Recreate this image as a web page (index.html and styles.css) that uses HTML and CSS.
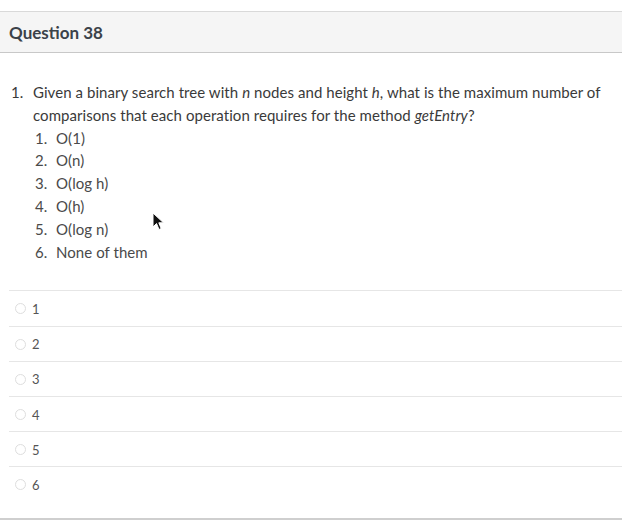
FILE: index.html
```html
<!DOCTYPE html>
<html>
<head>
<meta charset="utf-8">
<link rel="stylesheet" href="styles.css">
</head>
<body>
<div class="question">
  <div class="header">Question 38</div>
  <div class="text">
    <ol class="main-list">
      <li>Given a binary search tree with <em>n</em> nodes and height <em>h</em>, what is the maximum number of comparisons that each operation requires for the method <em>getEntry</em>?
        <ol class="sub-list">
          <li>O(1)</li>
          <li>O(n)</li>
          <li>O(log h)</li>
          <li>O(h)</li>
          <li>O(log n)</li>
          <li>None of them</li>
        </ol>
      </li>
    </ol>
  </div>
  <div class="answers">
    <div class="answer"><span class="radio"></span><span class="label">1</span></div>
    <div class="answer"><span class="radio"></span><span class="label">2</span></div>
    <div class="answer"><span class="radio"></span><span class="label">3</span></div>
    <div class="answer"><span class="radio"></span><span class="label">4</span></div>
    <div class="answer"><span class="radio"></span><span class="label">5</span></div>
    <div class="answer last"><span class="radio"></span><span class="label">6</span></div>
  </div>
</div>
<svg class="cursor" width="14" height="20" viewBox="0 0 14 20">
  <path d="M1 1 L1 15 L4.5 11.5 L7 17.5 L9.2 16.5 L6.8 10.8 L11.5 10.8 Z" fill="#111" stroke="#fff" stroke-width="1"/>
</svg>
</body>
</html>
```
FILE: styles.css
```css
html, body {
  margin: 0;
  padding: 0;
  background: #fff;
}
body {
  font-family: Lato, "Open Sans", "Liberation Sans", sans-serif;
  color: #2d3b45;
  width: 622px;
  height: 530px;
  overflow: hidden;
  position: relative;
}
.question {
  margin-top: 11px;
  border-top: 1px solid #d9d9d9;
  border-bottom: 2px solid #cfcfcf;
}
.header {
  height: 40px;
  background: #f5f5f5;
  border-bottom: 1px solid #c8c8c8;
  display: flex;
  align-items: center;
  padding-left: 9px;
  font-size: 17px;
  font-weight: bold;
  color: #3b4249;
}
.text {
  padding: 28px 0 27px 0;
  font-size: 15px;
  line-height: 22.8px;
  letter-spacing: 0.06px;
  color: #3a3a3a;
}
.main-list,
.sub-list {
  margin: 0;
  list-style: none;
  counter-reset: item;
}
.main-list {
  padding-left: 33px;
}
.sub-list {
  padding-left: 23px;
  color: #4a4a4a;
}
.main-list > li,
.sub-list > li {
  counter-increment: item;
}
.main-list > li::before {
  content: counter(item) ".";
  display: inline-block;
  width: 22px;
  margin-left: -22px;
}
.sub-list > li::before {
  content: counter(item) ".";
  display: inline-block;
  width: 21px;
  margin-left: -21px;
}
.answers {
  margin-left: 9px;
}
.answer {
  height: 35.2px;
  border-top: 1px solid #e6e6e6;
  display: flex;
  align-items: center;
  box-sizing: border-box;
  padding-top: 1px;
}
.answer.last {
  height: 52px;
  padding-bottom: 17px;
}
.radio {
  width: 9px;
  height: 9px;
  border: 1px solid #dedede;
  border-radius: 50%;
  margin-left: 6px;
  margin-right: 6px;
  background: #fff;
}
.label {
  font-size: 13px;
  color: #555;
}
.cursor {
  position: absolute;
  left: 152px;
  top: 212px;
}
```
